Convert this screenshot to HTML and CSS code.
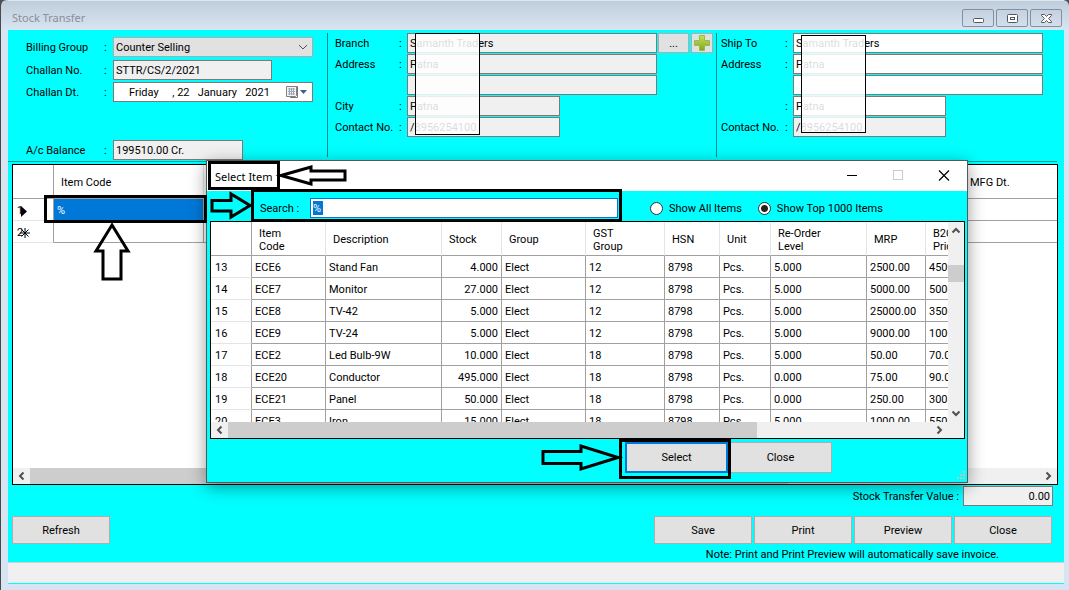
FILE: index.html
```
<!DOCTYPE html>
<html lang="en">
<head>
    <meta charset="UTF-8">
    <meta name="viewport" content="width=device-width, initial-scale=1.0">
    <title>Stock Transfer</title>
    <link rel="stylesheet" href="styles.css">
</head>
<body>
    <div class="window">
        <div class="titlebar">
            <div class="window-title">Stock Transfer</div>
            <div class="window-buttons">
                <button class="win-btn" type="button" aria-label="Minimize">
                    <svg width="13" height="11" viewBox="0 0 13 11"><rect x="1.5" y="5.5" width="10" height="4" rx="1" fill="#fff" stroke="#53565c"/></svg>
                </button>
                <button class="win-btn" type="button" aria-label="Restore">
                    <svg width="13" height="11" viewBox="0 0 13 11"><rect x="1.5" y="1.5" width="10" height="8" rx="1" fill="#fff" stroke="#53565c"/><rect x="4.5" y="4.5" width="4" height="2" fill="#fff" stroke="#53565c"/></svg>
                </button>
                <button class="win-btn" type="button" aria-label="Close">
                    <svg width="13" height="11" viewBox="0 0 13 11"><path d="M1.5 1.500h3l2 2 2-2h3v1l-3 3 3 3v1h-3l-2-2-2 2h-3v-1l3-3-3-3z" fill="#fff" stroke="#53565c"/></svg>
                </button>
            </div>
        </div>

        <div class="client">
            <form class="header-panel">
                <div class="section billing">
                    <div class="field">
                        <label for="billing-group">Billing Group</label><span>:</span>
                        <select id="billing-group" class="wide"><option>Counter Selling</option></select>
                    </div>
                    <div class="field">
                        <label for="challan-no">Challan No.</label><span>:</span>
                        <input id="challan-no" class="medium" type="text" value="STTR/CS/2/2021" readonly>
                    </div>
                    <div class="field">
                        <label for="challan-dt">Challan Dt.</label><span>:</span>
                        <div class="date-picker">
                            <input id="challan-dt" type="text" value="Friday     , 22   January   2021">
                            <button type="button" aria-label="Open calendar">
                                <svg width="22" height="14" viewBox="0 0 22 14">
                                    <path d="M2.500 1.500h9v11h-7l-2-2v-8z" fill="#fff" stroke="#777"/>
                                    <path d="M0.500 1.500h10v9l-1 1h-9z" fill="#f4f4f4" stroke="#85807c"/>
                                    <path d="M2 4h7M2 6.500h7M2 9h7M3.500 3v7M5.500 3v7M7.500 3v7" stroke="#9aa7bd" fill="none"/>
                                    <path d="M14 5h7l-3.500 4z" fill="#3c6190"/>
                                </svg>
                            </button>
                        </div>
                    </div>
                    <div class="field balance">
                        <label for="balance">A/c Balance</label><span>:</span>
                        <input id="balance" class="small" type="text" value="199510.00 Cr." readonly>
                    </div>
                </div>

                <div class="section party">
                    <div class="field">
                        <label for="branch">Branch</label><span>:</span>
                        <input id="branch" type="text" value="Samanth Traders" readonly>
                        <button class="btn browse" type="button">...</button>
                        <button class="btn add" type="button" aria-label="Add branch">
                            <svg width="18" height="18" viewBox="0 0 18 18">
                                <defs><linearGradient id="plus" x1="0" y1="0" x2="0" y2="1"><stop offset="0" stop-color="#c5e05a"/><stop offset="1" stop-color="#7fa91b"/></linearGradient></defs>
                                <path d="M6.500 1.500h5v5h5v5h-5v5h-5v-5h-5v-5h5z" fill="url(#plus)" stroke="#9ab94a"/>
                            </svg>
                        </button>
                    </div>
                    <div class="field">
                        <label for="address">Address</label><span>:</span>
                        <input id="address" type="text" value="Patna" readonly>
                    </div>
                    <div class="field">
                        <label></label><span></span>
                        <input type="text" aria-label="Address line 2" readonly>
                    </div>
                    <div class="field">
                        <label for="city">City</label><span>:</span>
                        <input id="city" class="short" type="text" value="Patna" readonly>
                    </div>
                    <div class="field">
                        <label for="contact">Contact No.</label><span>:</span>
                        <input id="contact" class="short" type="text" value="/8956254100" readonly>
                    </div>
                    <div class="mask"></div>
                </div>

                <div class="section party ship">
                    <div class="field">
                        <label for="ship-to">Ship To</label><span>:</span>
                        <input id="ship-to" type="text" value="Samanth Traders">
                    </div>
                    <div class="field">
                        <label for="ship-address">Address</label><span>:</span>
                        <input id="ship-address" type="text" value="Patna">
                    </div>
                    <div class="field">
                        <label></label><span></span>
                        <input type="text" aria-label="Ship address line 2">
                    </div>
                    <div class="field">
                        <label></label><span>:</span>
                        <input class="short" type="text" value="Patna" aria-label="Ship city">
                    </div>
                    <div class="field">
                        <label for="ship-contact">Contact No.</label><span>:</span>
                        <input id="ship-contact" class="short" type="text" value="/8956254100" readonly>
                    </div>
                    <div class="mask"></div>
                </div>
            </form>

            <div class="grid main-grid">
                <div class="grid-view">
                    <table>
                        <colgroup><col class="w-row"><col class="w-item"><col><col class="w-mfg"></colgroup>
                        <thead>
                            <tr><th></th><th>Item Code</th><th></th><th>MFG Dt.</th></tr>
                        </thead>
                        <tbody>
                            <tr>
                                <th>1<svg class="row-marker" width="8" height="11" viewBox="0 0 8 11"><path d="M1 0l6 5.500-6 5.500z"/></svg></th>
                                <td class="selected">%</td><td></td><td></td>
                            </tr>
                            <tr>
                                <th>2<svg class="row-marker" width="10" height="10" viewBox="0 0 10 10"><path d="M5 0v10M0 5h10M1.500 1.500l7 7M8.500 1.500l-7 7" stroke="#000"/></svg></th>
                                <td></td><td></td><td></td>
                            </tr>
                        </tbody>
                    </table>
                </div>
                <div class="hscroll">
                    <svg width="17" height="16" viewBox="0 0 17 16"><path d="M10.500 4.500L7 8l3.500 3.500"/></svg>
                    <div class="thumb"></div>
                    <div class="track"></div>
                    <svg width="17" height="16" viewBox="0 0 17 16"><path d="M6.500 4.500L10 8l-3.500 3.500"/></svg>
                </div>
            </div>

            <div class="total-row">
                <label for="total">Stock Transfer Value :</label>
                <input id="total" type="text" value="0.00" readonly>
            </div>
            <div class="actions">
                <button class="btn refresh" type="button">Refresh</button>
                <button class="btn" type="button">Save</button>
                <button class="btn" type="button">Print</button>
                <button class="btn" type="button">Preview</button>
                <button class="btn" type="button">Close</button>
            </div>
            <div class="note">Note: Print and Print Preview will automatically save invoice.</div>
            <div class="statusbar"></div>
        </div>
    </div>

    <div class="dialog" role="dialog" aria-labelledby="dialog-title">
        <div class="dialog-titlebar">
            <div id="dialog-title" class="dialog-title">Select Item</div>
            <button type="button" aria-label="Minimize"><svg width="12" height="12" viewBox="0 0 12 12"><path d="M1 5.500h10" stroke="#000"/></svg></button>
            <button type="button" aria-label="Maximize" disabled><svg width="12" height="12" viewBox="0 0 12 12"><rect x="1.500" y="0.500" width="9" height="9" fill="none" stroke="#ccc"/></svg></button>
            <button type="button" aria-label="Close"><svg width="12" height="12" viewBox="0 0 12 12"><path d="M1 0.500l10 10M11 0.500L1 10.500" stroke="#000" stroke-width="1.200"/></svg></button>
        </div>
        <div class="search-row">
            <label for="search">Search :</label>
            <input id="search" type="text" value="%">
            <label class="radio"><input type="radio" name="show">Show All Items</label>
            <label class="radio"><input type="radio" name="show" checked>Show Top 1000 Items</label>
        </div>
        <div class="grid item-grid">
            <div class="grid-body">
                <div class="grid-view">
                    <table>
                        <colgroup>
                            <col class="w-row"><col class="w-code"><col class="w-desc"><col class="w-stock"><col class="w-group"><col class="w-gst">
                            <col class="w-hsn"><col class="w-unit"><col class="w-reorder"><col class="w-mrp"><col>
                        </colgroup>
                        <thead>
                            <tr><th></th><th>Item<br>Code</th><th>Description</th><th>Stock</th><th>Group</th><th>GST<br>Group</th><th>HSN</th><th>Unit</th><th>Re-Order<br>Level</th><th>MRP</th><th>B2C<br>Price</th></tr>
                        </thead>
                        <tbody>
                            <tr><th>13</th><td>ECE6</td><td>Stand Fan</td><td class="num">4.000</td><td>Elect</td><td>12</td><td>8798</td><td>Pcs.</td><td>5.000</td><td>2500.00</td><td>4500.00</td></tr>
                            <tr><th>14</th><td>ECE7</td><td>Monitor</td><td class="num">27.000</td><td>Elect</td><td>12</td><td>8798</td><td>Pcs.</td><td>5.000</td><td>5000.00</td><td>5000.00</td></tr>
                            <tr><th>15</th><td>ECE8</td><td>TV-42</td><td class="num">5.000</td><td>Elect</td><td>12</td><td>8798</td><td>Pcs.</td><td>5.000</td><td>25000.00</td><td>35000.00</td></tr>
                            <tr><th>16</th><td>ECE9</td><td>TV-24</td><td class="num">5.000</td><td>Elect</td><td>12</td><td>8798</td><td>Pcs.</td><td>5.000</td><td>9000.00</td><td>10000.00</td></tr>
                            <tr><th>17</th><td>ECE2</td><td>Led Bulb-9W</td><td class="num">10.000</td><td>Elect</td><td>18</td><td>8798</td><td>Pcs.</td><td>5.000</td><td>50.00</td><td>70.00</td></tr>
                            <tr><th>18</th><td>ECE20</td><td>Conductor</td><td class="num">495.000</td><td>Elect</td><td>18</td><td>8798</td><td>Pcs.</td><td>0.000</td><td>75.00</td><td>90.00</td></tr>
                            <tr><th>19</th><td>ECE21</td><td>Panel</td><td class="num">50.000</td><td>Elect</td><td>18</td><td>8798</td><td>Pcs.</td><td>0.000</td><td>250.00</td><td>300.00</td></tr>
                            <tr><th>20</th><td>ECE3</td><td>Iron</td><td class="num">15.000</td><td>Elect</td><td>18</td><td>8798</td><td>Pcs.</td><td>5.000</td><td>1000.00</td><td>550.00</td></tr>
                        </tbody>
                    </table>
                </div>
                <div class="vscroll">
                    <svg width="16" height="17" viewBox="0 0 16 17"><path d="M4.500 10.500L8 7l3.500 3.500"/></svg>
                    <div class="thumb"></div>
                    <svg width="16" height="17" viewBox="0 0 16 17"><path d="M4.500 6.500L8 10l3.500-3.500"/></svg>
                </div>
            </div>
            <div class="hscroll">
                <svg width="17" height="16" viewBox="0 0 17 16"><path d="M10.500 4.500L7 8l3.500 3.500"/></svg>
                <div class="thumb"></div>
                <div class="track"></div>
                <svg width="17" height="16" viewBox="0 0 17 16"><path d="M6.500 4.500L10 8l-3.500 3.500"/></svg>
                <div class="corner"></div>
            </div>
        </div>
        <div class="dialog-actions">
            <button class="btn primary" type="button">Select</button>
            <button class="btn" type="button">Close</button>
        </div>
        <svg class="grip" width="9" height="9" viewBox="0 0 9 9"><path d="M6 0h2v2H6zM3 3h2v2H3zM6 3h2v2H6zM0 6h2v2H0zM3 6h2v2H3zM6 6h2v2H6z" fill="#b8c4c4"/></svg>
    </div>

    <!-- callout frames and arrows -->
    <svg class="callouts" width="760" height="490" viewBox="0 0 760 490" aria-hidden="true">
        <rect x="45.500" y="196.500" width="160" height="25"/>
        <rect x="209.500" y="162.500" width="69" height="26"/>
        <rect x="252.500" y="190.500" width="368" height="30"/>
        <rect x="620.500" y="440.500" width="109" height="37"/>
        <path d="M281 175.500L311 167V171H345V180H311V184Z"/>
        <path d="M212 200.500H231V194L250 205.500L231 217V211H212Z"/>
        <path d="M112 225L128 251H121V279H103V251H96Z"/>
        <path d="M543 451.500H581V446L618 457.500L581 469V463.500H543Z"/>
    </svg>
</body>
</html>
```
FILE: styles.css
```
* {
    box-sizing: border-box;
}
body {
    margin: 0;
    position: relative;
    min-height: 100vh;
    font-family: Roboto, 'Liberation Sans', Arial, sans-serif;
    font-size: 11px;
    line-height: 13px;
    color: #000;
    background-color: #4c4f55;
}
input, select, button {
    font: inherit;
    color: inherit;
    margin: 0;
    border-radius: 0;
}
.window {
    display: flex;
    flex-direction: column;
    min-height: 100vh;
    padding: 0 5px 6px 7px;
    border-left: 1px solid #4a4a4a;
    border-radius: 6px 6px 0 0;
    background: linear-gradient(#bfccd9, #d7e4f2 30px);
}
.titlebar {
    display: flex;
    justify-content: space-between;
    height: 30px;
    padding: 8px 2px 0 4px;
    border-top: 1px solid #dfe6ee;
}
.window-title {
    font-family: 'Noto Sans', sans-serif;
    font-size: 11px;
    line-height: 18px;
    color: #8b8f96;
}
.window-buttons {
    display: flex;
    gap: 2px;
}
.win-btn {
    display: flex;
    align-items: center;
    justify-content: center;
    width: 32px;
    height: 18px;
    padding: 0;
    border: 1px solid #8390a2;
    border-radius: 2px;
    background: linear-gradient(#c5d1df, #d3dfeb);
}
.client {
    flex: 1;
    display: flex;
    flex-direction: column;
    background-color: #00ffff;
}

/* header fields */
.header-panel {
    display: grid;
    grid-template-columns: 319px 389px 1fr;
    height: 132px;
    margin: 0 7px 2px 5px;
    margin-left: 0;
    padding-top: 3px;
    border-bottom: 1px solid #009c9c;
}
.section {
    display: flex;
    flex-direction: column;
    gap: 1px;
    position: relative;
    height: 124px;
}
.billing {
    padding: 4px 0 0 18px;
    gap: 2px;
}
.billing .field:first-child {
    margin-bottom: 1px;
}
.party {
    padding-left: 7px;
    border-left: 1px solid #008c8c;
}
.ship {
    padding-left: 4px;
}
.field {
    display: flex;
    align-items: center;
    height: 20px;
}
.field label {
    width: 78px;
}
.field > span {
    width: 9px;
}
.party .field label {
    width: 64px;
}
.party .field > span {
    width: 8px;
}
.balance {
    margin-top: 36px;
}
.field input, .total-row input {
    height: 20px;
    padding: 0 2px;
    border: 1px solid #7a7a7a;
    background-color: #fff;
}
.field input:read-only, .total-row input {
    background-color: #f0f0f0;
}
.party .field input {
    width: 250px;
}
.ship .field input {
    flex: 0 1 250px;
}
.party .field input.short, .ship .field input.short {
    flex: none;
    width: 153px;
}
.medium {
    width: 159px;
}
.small {
    width: 130px;
}
.wide {
    width: 200px;
    height: 20px;
    padding: 0 2px;
    border: 1px solid #adadad;
    appearance: none;
    background: #e1e1e1 url("data:image/svg+xml,%3Csvg xmlns='http://www.w3.org/2000/svg' width='10' height='6'%3E%3Cpath d='M1 1l4 4 4-4' fill='none' stroke='%23555'/%3E%3C/svg%3E") no-repeat right 4px center;
}
.date-picker {
    display: flex;
    width: 200px;
    height: 20px;
    border: 1px solid #7a7a7a;
    background-color: #fff;
}
.field .date-picker input {
    flex: 1;
    min-width: 0;
    height: 18px;
    padding: 0 0 0 15px;
    border: none;
}
.date-picker button {
    display: flex;
    align-items: center;
    padding: 0 4px;
    border: none;
    background: none;
}
.btn {
    padding: 0;
    border: 1px solid #adadad;
    background-color: #e1e1e1;
    text-align: center;
}
.browse {
    width: 31px;
    height: 20px;
    margin-left: 1px;
}
.add {
    display: flex;
    align-items: center;
    justify-content: center;
    width: 22px;
    height: 20px;
    margin-left: 2px;
}
.mask {
    position: absolute;
    top: 0;
    left: 87px;
    width: 65px;
    height: 102px;
    border: 1px solid #000;
    background-color: rgba(255, 255, 255, 0.86);
}
.ship .mask {
    top: 2px;
    left: 84px;
    height: 98px;
}

/* grids */
.grid {
    display: flex;
    flex-direction: column;
    border: 1px solid #000;
    background-color: #fff;
}
.grid-view {
    flex: 1;
    min-width: 0;
    overflow: hidden;
}
.grid table {
    width: 100%;
    table-layout: fixed;
    border-collapse: separate;
    border-spacing: 0;
}
.grid th, .grid td {
    height: 22px;
    padding: 2px 3px 0;
    border-right: 1px solid #a0a0a0;
    border-bottom: 1px solid #a0a0a0;
    font-weight: normal;
    text-align: left;
    white-space: nowrap;
}
.grid thead th {
    height: 34px;
    padding: 2px 7px 0;
    border-right-color: #e5e5e5;
}
.grid tbody th {
    padding: 2px 4px 0;
    border-bottom-color: #e5e5e5;
}
.grid thead th:first-child {
    border-right-color: #a0a0a0;
}
.grid th:last-child, .grid td:last-child {
    border-right: none;
}
.grid .num {
    text-align: right;
}
.main-grid {
    flex: 1;
    margin: 0 6px 0 4px;
    min-height: 320px;
}
.grid .selected {
    color: #fff;
    background-color: #0078d7;
}
.row-marker {
    margin-left: -3px;
    vertical-align: middle;
}
.w-row { width: 41px; }
.w-item { width: 150px; }
.w-mfg { width: 94px; }
.w-code { width: 74px; }
.w-desc { width: 116px; }
.w-stock { width: 60px; }
.w-group { width: 84px; }
.w-gst { width: 79px; }
.w-hsn { width: 55px; }
.w-unit { width: 51px; }
.w-reorder { width: 96px; }
.w-mrp { width: 59px; }

.hscroll {
    display: flex;
    height: 16px;
    background-color: #f0f0f0;
}
.vscroll {
    display: flex;
    flex-direction: column;
    justify-content: space-between;
    width: 16px;
    background-color: #f0f0f0;
}
.hscroll svg, .vscroll svg {
    flex: none;
    fill: none;
    stroke: #505050;
    stroke-width: 2;
}
.thumb {
    background-color: #cdcdcd;
}
.hscroll .thumb {
    flex: 3;
}
.hscroll .track {
    flex: 1;
}
.vscroll .thumb {
    height: 17px;
    margin-bottom: 98px;
}

/* bottom of the form */
.total-row {
    display: flex;
    align-items: center;
    justify-content: flex-end;
    gap: 4px;
    padding: 1px 11px 0 0;
}
.total-row input {
    width: 90px;
    text-align: right;
}
.actions {
    display: flex;
    gap: 2px;
    padding: 10px 12px 0 4px;
}
.actions .btn {
    width: 98px;
    height: 28px;
}
.actions .refresh {
    margin-right: auto;
}
.note {
    padding: 4px 65px 1px 0;
    text-align: right;
}
.statusbar {
    height: 21px;
    margin-bottom: 1px;
    border-top: 1px solid #d0d0d0;
    background-color: #f0f0f0;
}

/* item picker */
.dialog {
    position: absolute;
    top: 160px;
    left: 206px;
    width: calc(100% - 307px);
    border: 1px solid #4f5b5b;
    background-color: #00ffff;
    box-shadow: 0 4px 16px rgba(0, 0, 0, 0.4);
}
.dialog-titlebar {
    display: flex;
    align-items: center;
    height: 30px;
    padding-left: 8px;
    background-color: #fff;
}
.dialog-title {
    flex: 1;
    font-family: 'Noto Sans', sans-serif;
    font-size: 11px;
}
.dialog-titlebar button {
    display: flex;
    align-items: center;
    justify-content: center;
    width: 46px;
    height: 30px;
    padding: 0;
    border: none;
    background: none;
}
.search-row {
    display: flex;
    align-items: center;
    height: 30px;
    padding: 4px 0 0 53px;
}
.search-row label:first-child {
    width: 50px;
}
#search {
    width: 308px;
    height: 20px;
    margin-right: 32px;
    padding: 0 2px;
    border: 1px solid #0078d7;
    color: #fff;
    background: #fff linear-gradient(#0078d7, #0078d7) no-repeat 2px 2px / 10px 14px;
}
.radio {
    display: flex;
    align-items: center;
    gap: 6px;
    margin-right: 16px;
}
.radio input {
    appearance: none;
    width: 13px;
    height: 13px;
    border: 1px solid #333;
    border-radius: 50%;
    background-color: #fff;
}
.radio input:checked {
    background: radial-gradient(circle, #222 3px, #fff 4px);
}
.item-grid {
    height: 218px;
    margin: 0 2px 0 3px;
}
.grid-body {
    flex: 1;
    display: flex;
    min-height: 0;
}
.item-grid .hscroll .thumb {
    flex: 529;
}
.item-grid .hscroll .track {
    flex: 174;
}
.corner {
    width: 16px;
}
.dialog-actions {
    display: flex;
    gap: 1px;
    padding: 3px 0 9px 418px;
}
.dialog-actions .btn {
    width: 103px;
    height: 31px;
}
.dialog-actions .primary {
    border: 2px solid #0078d7;
}
.grip {
    position: absolute;
    right: 1px;
    bottom: 2px;
}
.callouts {
    position: absolute;
    top: 0;
    left: 0;
    fill: none;
    stroke: #000;
    stroke-width: 3;
    pointer-events: none;
}
```
